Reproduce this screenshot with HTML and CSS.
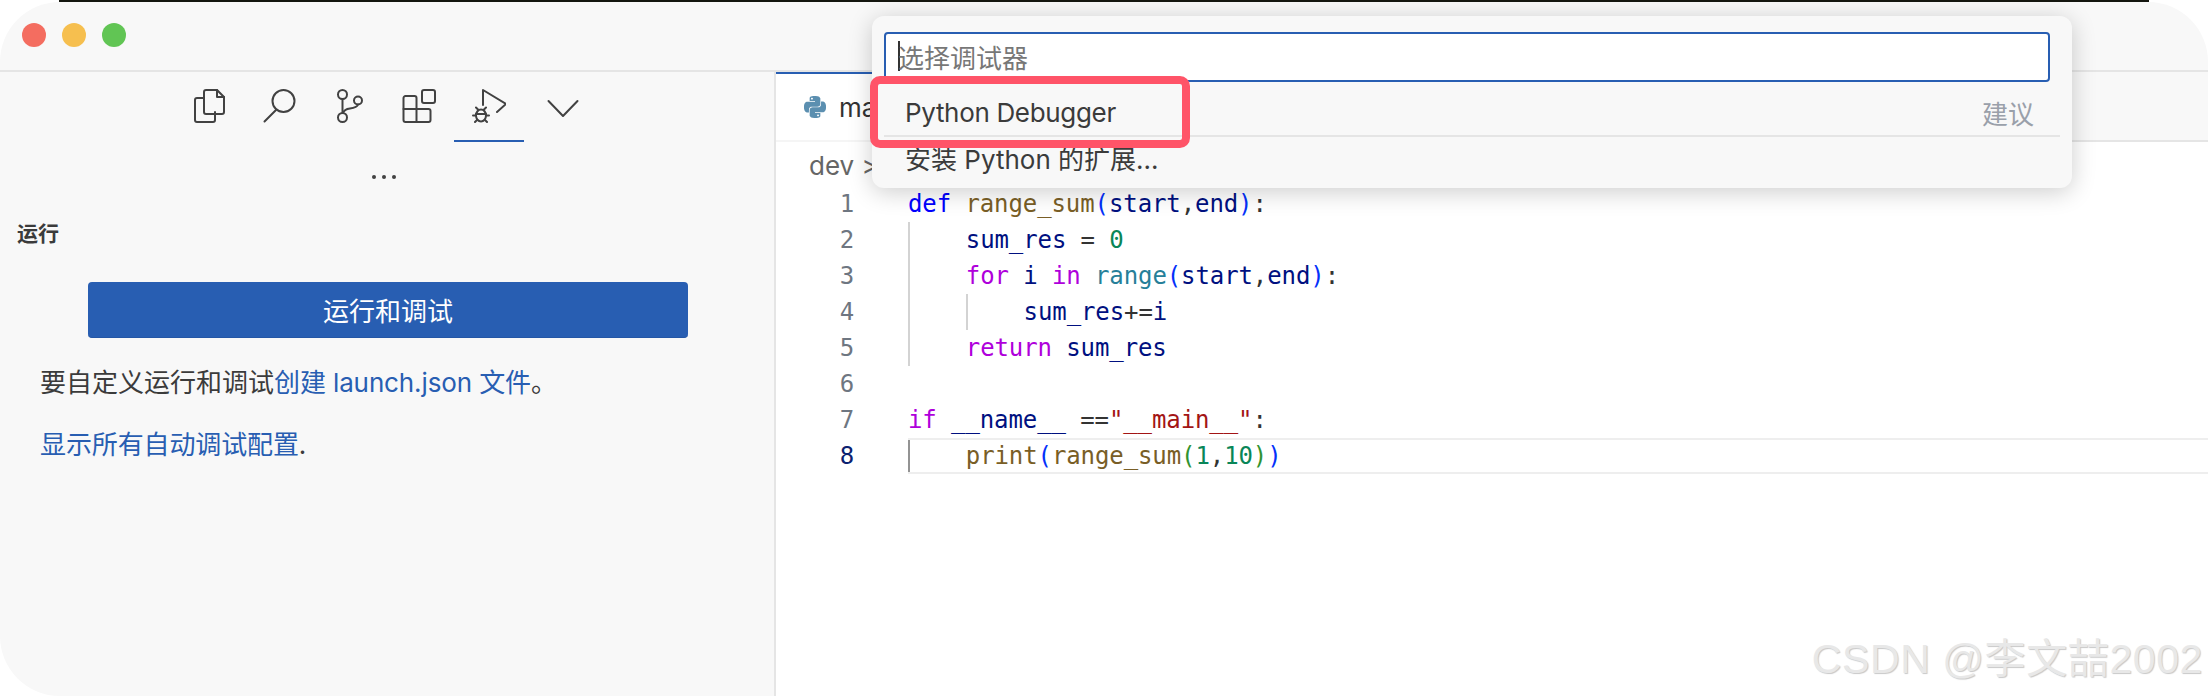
FILE: index.html
```html
<!DOCTYPE html>
<html lang="zh-CN">
<head>
    <meta charset="UTF-8">
    <title>main.py - Visual Studio Code</title>
    <link rel="stylesheet" href="styles.css">
</head>
<body>
    <div class="top-edge"></div>
    <div class="window">
        <div class="titlebar">
            <span class="light light-red"></span>
            <span class="light light-yellow"></span>
            <span class="light light-green"></span>
        </div>

        <div class="workbench">
            <aside class="sidebar">
                <nav class="activity-tabs">
                    <div class="activity-tab">
                        <svg class="icon" viewBox="0 0 34 34">
                            <path d="M14 1h11l7 7v15a2 2 0 0 1-2 2H14a2 2 0 0 1-2-2V3a2 2 0 0 1 2-2z"/>
                            <path d="M25 1v7h7"/>
                            <path d="M12 9H5a2 2 0 0 0-2 2v20a2 2 0 0 0 2 2h16a2 2 0 0 0 2-2v-8"/>
                        </svg>
                    </div>
                    <div class="activity-tab">
                        <svg class="icon" viewBox="0 0 34 34">
                            <circle cx="21.5" cy="12" r="11"/>
                            <path d="M14 21L2.500 32.500"/>
                        </svg>
                    </div>
                    <div class="activity-tab">
                        <svg class="icon" viewBox="0 0 34 34">
                            <circle cx="10.5" cy="5.5" r="4.5"/>
                            <circle cx="10.5" cy="28.5" r="4.5"/>
                            <circle cx="26" cy="11.5" r="4"/>
                            <path d="M10.5 10v14"/>
                            <path d="M11 24c1-3 3-4 7-4.500 4-.5 7-1 8-4"/>
                        </svg>
                    </div>
                    <div class="activity-tab">
                        <svg class="icon" viewBox="0 0 34 34">
                            <path d="M3.500 7h9a2 2 0 0 1 2 2v11h12a2 2 0 0 1 2 2v9a2 2 0 0 1-2 2h-23a2 2 0 0 1-2-2V9a2 2 0 0 1 2-2z"/>
                            <path d="M1.500 20h13v13"/>
                            <rect x="20" y="1" width="13" height="13" rx="2"/>
                        </svg>
                    </div>
                    <div class="activity-tab active">
                        <svg class="icon" viewBox="0 0 34 34">
                            <path d="M11 16V1l23 14-9 8"/>
                            <ellipse cx="9" cy="26.500" rx="5" ry="6"/>
                            <path d="M4 25h10M6 20.500l-2-2M12 20.500l2-2M4 26.500H1M14 26.500h3M5 31l-2 2M13 31l2 2"/>
                        </svg>
                    </div>
                    <div class="activity-tab activity-more">
                        <svg class="icon" viewBox="0 0 34 34">
                            <path d="M2.500 12l14.500 15 14.500-15"/>
                        </svg>
                    </div>
                </nav>

                <div class="sidebar-more">
                    <span class="more-dot"></span>
                    <span class="more-dot"></span>
                    <span class="more-dot"></span>
                </div>

                <h2 class="sidebar-title">运行</h2>
                <button class="run-btn">运行和调试</button>
                <p class="hint">要自定义运行和调试<a href="#">创建 launch.json 文件</a>。</p>
                <p class="hint hint-last"><a href="#">显示所有自动调试配置</a>.</p>
            </aside>

            <main class="editor">
                <div class="tabbar">
                    <div class="tab">
                        <svg class="py-icon" viewBox="0 0 24 24"><path d="M14.250.180l.9.2.73.26.59.3.45.32.34.34.25.34.16.33.1.3.04.26.02.2-.01.13V8.500l-.05.63-.13.55-.21.46-.26.38-.3.31-.33.25-.35.19-.35.14-.33.1-.3.07-.26.04-.21.02H8.770l-.69.05-.59.14-.5.22-.41.27-.33.32-.27.35-.2.36-.15.37-.1.35-.07.32-.04.27-.02.21v3.060H3.170l-.21-.03-.28-.07-.32-.12-.35-.18-.36-.26-.36-.36-.35-.46-.32-.59-.28-.73-.21-.88-.14-1.050-.05-1.230.06-1.220.16-1.040.24-.87.32-.71.36-.57.4-.44.42-.33.42-.24.4-.16.36-.1.32-.05.24-.01h.16l.06.01h8.160v-.83H6.180l-.01-2.750-.02-.37.05-.34.11-.31.17-.28.25-.26.31-.23.38-.2.44-.18.51-.15.58-.12.64-.1.71-.06.77-.04.84-.02 1.270.05zm-6.300 1.980l-.23.33-.08.41.08.41.23.34.33.22.41.09.41-.09.33-.22.23-.34.08-.41-.08-.41-.23-.33-.33-.22-.41-.09-.41.09zm13.090 3.950l.28.06.32.12.35.18.36.27.36.35.35.47.32.59.28.73.21.88.14 1.040.05 1.230-.06 1.230-.16 1.040-.24.86-.32.71-.36.57-.4.45-.42.33-.42.24-.4.16-.36.09-.32.05-.24.02-.16-.01h-8.220v.82h5.840l.01 2.760.02.36-.05.34-.11.31-.17.29-.25.25-.31.24-.38.2-.44.17-.51.15-.58.13-.64.09-.71.07-.77.04-.84.01-1.270-.04-1.070-.14-.9-.2-.73-.25-.59-.3-.45-.33-.34-.34-.25-.34-.16-.33-.1-.3-.04-.25-.02-.2.01-.13v-5.340l.05-.64.13-.54.21-.46.26-.38.3-.32.33-.24.35-.2.35-.14.33-.1.3-.06.26-.04.21-.02.13-.01h5.840l.69-.05.59-.14.5-.21.41-.28.33-.32.27-.35.2-.36.15-.36.1-.35.07-.32.04-.28.02-.21V6.070h2.090l.14.01zm-6.470 14.250l-.23.33-.08.41.08.41.23.33.33.23.41.08.41-.08.33-.23.23-.33.08-.41-.08-.41-.23-.33-.33-.23-.41-.08-.41.08z"/></svg>
                        ma
                    </div>
                </div>
                <div class="breadcrumb">dev &gt;</div>

                <div class="code">
                    <div class="line"><span class="ln">1</span><span class="src"><span class="k-def">def</span> <span class="fn">range_sum</span><span class="b1">(</span><span class="v">start</span>,<span class="v">end</span><span class="b1">)</span>:</span></div>
                    <div class="line"><span class="ln">2</span><span class="src"><span class="indent"></span><span class="v">sum_res</span> = <span class="num">0</span></span></div>
                    <div class="line"><span class="ln">3</span><span class="src"><span class="indent"></span><span class="k">for</span> <span class="v">i</span> <span class="k">in</span> <span class="ty">range</span><span class="b1">(</span><span class="v">start</span>,<span class="v">end</span><span class="b1">)</span>:</span></div>
                    <div class="line"><span class="ln">4</span><span class="src"><span class="indent"></span><span class="indent"></span><span class="v">sum_res</span>+=<span class="v">i</span></span></div>
                    <div class="line"><span class="ln">5</span><span class="src"><span class="indent"></span><span class="k">return</span> <span class="v">sum_res</span></span></div>
                    <div class="line"><span class="ln">6</span><span class="src"></span></div>
                    <div class="line"><span class="ln">7</span><span class="src"><span class="k">if</span> <span class="v">__name__</span> ==<span class="str">"__main__"</span>:</span></div>
                    <div class="line current"><span class="ln">8</span><span class="src"><span class="indent"></span><span class="fn">print</span><span class="b1">(</span><span class="fn">range_sum</span><span class="b2">(</span><span class="num">1</span>,<span class="num">10</span><span class="b2">)</span><span class="b1">)</span></span></div>
                </div>
            </main>
        </div>

        <div class="palette">
            <div class="palette-input"><span class="caret"></span>选择调试器</div>
            <div class="palette-row palette-row-first">
                <span>Python Debugger</span>
                <span class="palette-tag">建议</span>
            </div>
            <div class="palette-row palette-row-last">安装 Python 的扩展...</div>
            <div class="callout"></div>
        </div>
    </div>

    <div class="watermark">CSDN @李文喆2002</div>
</body>
</html>
```

FILE: styles.css
```css
* {
    box-sizing: border-box;
}

html, body {
    height: 100%;
}

body {
    margin: 0;
    background-color: white;
    font-family: Inter, 'Noto Sans CJK SC', sans-serif;
    color: #3b3b3b;
    display: flex;
    flex-direction: column;
    overflow: hidden;
    position: relative;
}

.top-edge {
    height: 2px;
    margin: 0 59px;
    background-color: #14160f;
    flex: none;
}

.window {
    flex: 1;
    min-height: 0;
    display: flex;
    flex-direction: column;
    position: relative;
    border-radius: 60px 60px 0 60px;
    background-color: white;
    overflow: hidden;
}

/* title bar */
.titlebar {
    height: 70px;
    flex: none;
    display: flex;
    align-items: center;
    gap: 16px;
    padding: 0 0 0 22px;
    background-color: #f8f8f8;
    border-bottom: 2px solid #e5e5e5;
}

.light {
    width: 24px;
    height: 24px;
    border-radius: 50%;
    margin-top: -2px;
}

.light-red { background-color: #f46d60; }
.light-yellow { background-color: #f6bf4f; }
.light-green { background-color: #61c554; }

.workbench {
    flex: 1;
    min-height: 0;
    display: flex;
}

/* sidebar */
.sidebar {
    width: 776px;
    flex: none;
    background-color: #f8f8f8;
    border-right: 2px solid #e5e5e5;
}

.activity-tabs {
    height: 70px;
    display: flex;
    justify-content: center;
    padding-right: 7px;
}

.activity-tab {
    width: 70px;
    padding-top: 17px;
    display: flex;
    justify-content: center;
}

.activity-tab.active {
    border-bottom: 2px solid #285eb2;
}

.activity-more {
    padding-left: 9px;
}

.icon {
    width: 34px;
    height: 34px;
    flex: none;
    fill: none;
    stroke: #424242;
    stroke-width: 2;
    stroke-linecap: round;
    stroke-linejoin: round;
}

.sidebar-more {
    height: 70px;
    display: flex;
    justify-content: center;
    align-items: center;
    gap: 6px;
    padding-right: 7px;
}

.more-dot {
    width: 4px;
    height: 4px;
    border-radius: 50%;
    background-color: #424242;
}

.sidebar-title {
    margin: 0;
    padding-left: 17px;
    font-size: 21px;
    line-height: 44px;
    font-weight: 700;
}

.run-btn {
    display: block;
    width: 600px;
    height: 56px;
    margin: 26px 0 0 88px;
    border: none;
    border-bottom: 1px solid #2456a5;
    border-radius: 4px;
    background-color: #285eb2;
    color: white;
    font-family: inherit;
    font-size: 26px;
}

.hint {
    margin: 27px 0 0 40px;
    font-size: 26px;
    line-height: 36px;
}

.hint-last {
    margin-top: 26px;
}

.hint a {
    color: #285eb2;
    text-decoration: none;
    letter-spacing: -0.12px;
}

/* editor */
.editor {
    flex: 1;
    min-width: 0;
    background-color: white;
}

.tabbar {
    height: 70px;
    background-color: #f8f8f8;
    border-bottom: 2px solid #e5e5e5;
}

.tab {
    width: 220px;
    height: 70px;
    display: flex;
    align-items: center;
    gap: 13px;
    padding: 0 0 0 28px;
    background-color: white;
    border-top: 2px solid #285eb2;
    border-bottom: 2px solid #f5f5f5;
    font-size: 26px;
    color: #333;
}

.py-icon {
    width: 22px;
    height: 22px;
    fill: #5b8fb0;
}

.breadcrumb {
    height: 44px;
    padding-left: 33px;
    font-size: 26px;
    line-height: 48px;
    color: #666;
}

.code {
    font-family: 'DejaVu Sans Mono', monospace;
    font-size: 24px;
    letter-spacing: -0.1px;
    color: #333;
}

.line {
    height: 36px;
    line-height: 36px;
    display: flex;
    white-space: pre;
}

.ln {
    width: 78px;
    flex: none;
    text-align: right;
    margin-right: 54px;
    color: #6e7681;
}

.src {
    flex: 1;
    height: 36px;
    line-height: 36px;
}

.indent {
    display: inline-block;
    width: 4ch;
    height: 36px;
    vertical-align: top;
    border-left: 2px solid #d3d3d3;
}

.line.current .ln {
    color: #0b216f;
}

.line.current .src {
    border-top: 2px solid #eeeeee;
    border-bottom: 2px solid #eeeeee;
    line-height: 32px;
}

.line.current .indent {
    border-left-color: #939393;
    height: 32px;
}

.k-def { color: #0000ff; }
.k { color: #af00db; }
.fn { color: #795e26; }
.v { color: #001080; }
.ty { color: #267f99; }
.num { color: #098658; }
.str { color: #a31515; }
.b1 { color: #0431fa; }
.b2 { color: #319331; }

/* debugger picker */
.palette {
    position: absolute;
    left: 872px;
    top: 14px;
    width: 1200px;
    height: 172px;
    padding: 16px 12px 0;
    background-color: #f8f8f8;
    border-radius: 12px;
    box-shadow: 0 4px 24px rgba(0, 0, 0, 0.2);
}

.palette-input {
    width: 1166px;
    height: 50px;
    padding: 0 0 2px 12px;
    display: flex;
    align-items: center;
    background-color: white;
    border: 2px solid #285eb2;
    border-radius: 4px;
    font-size: 26px;
    color: #777;
}

.caret {
    width: 2px;
    height: 30px;
    margin-right: -2px;
    background-color: #333;
}

.palette-row {
    height: 46px;
    padding: 0 26px 0 21px;
    display: flex;
    align-items: center;
    justify-content: space-between;
    font-size: 26px;
    color: #3b3b3b;
}

.palette-row-first {
    height: 55px;
    padding-top: 8px;
    border-bottom: 2px solid #e5e5e5;
    letter-spacing: -0.33px;
}

.palette-row-last {
    padding-bottom: 5px;
}

.palette-tag {
    color: #9aa0aa;
    letter-spacing: 0;
}

.callout {
    position: absolute;
    left: -2px;
    top: 60px;
    width: 320px;
    height: 72px;
    border: 8px solid #ff5468;
    border-radius: 10px;
}

.watermark {
    position: absolute;
    right: 5px;
    bottom: 14px;
    font-family: 'Liberation Sans', 'Noto Sans CJK SC', sans-serif;
    font-size: 41px;
    letter-spacing: 0.6px;
    line-height: 46px;
    color: #e8e8e8;
    text-shadow: 1px 1px 1px #c8c8c8;
}
```
